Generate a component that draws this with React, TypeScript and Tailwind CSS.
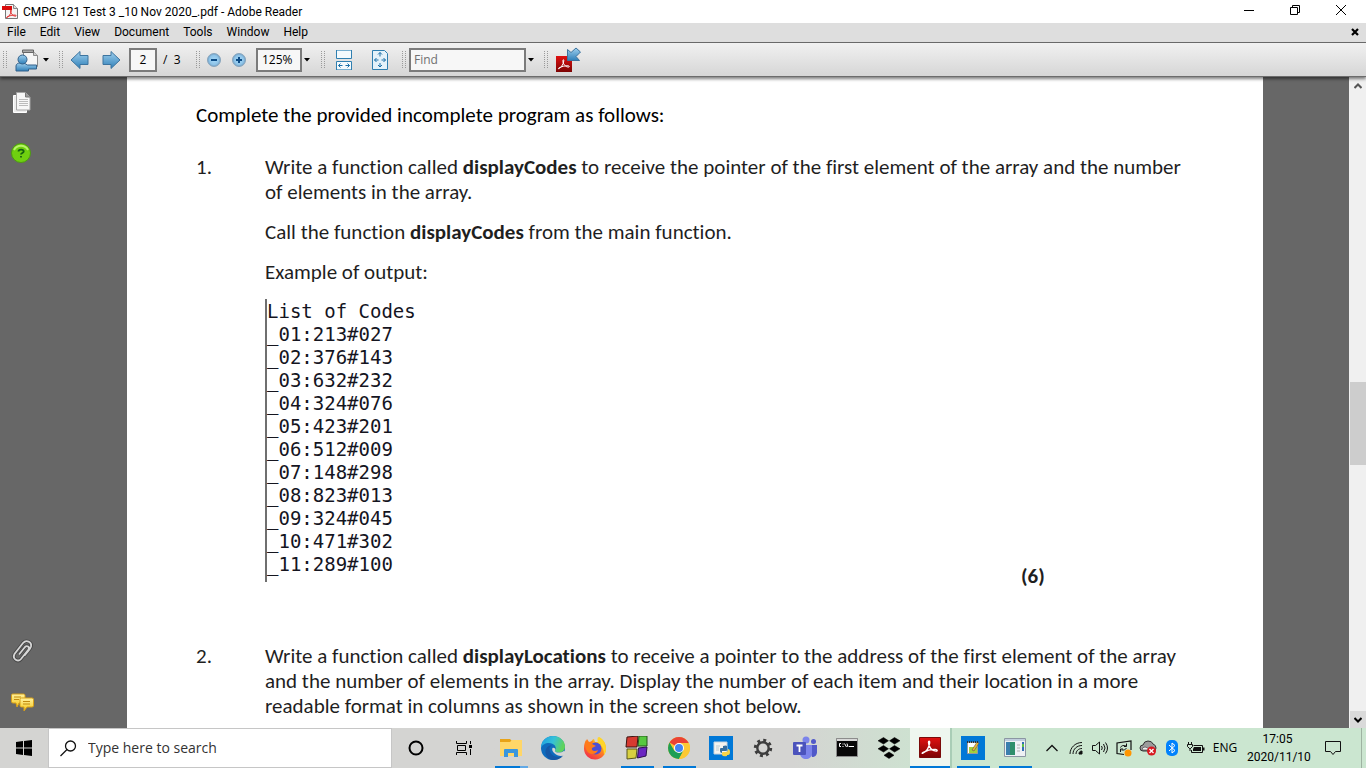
import React from "react";

const codes = [
  "01:213#027",
  "02:376#143",
  "03:632#232",
  "04:324#076",
  "05:423#201",
  "06:512#009",
  "07:148#298",
  "08:823#013",
  "09:324#045",
  "10:471#302",
  "11:289#100",
];

const menus = ["File", "Edit", "View", "Document", "Tools", "Window", "Help"];

function PdfMark({ stroke }: { stroke: string }) {
  return (
    <path
      d="M3 13.2c2.4-1 4.600-3.600 5.300-7.800.2-1.500-.9-1.800-.9-.2 0 3.400 2.600 6.300 5.600 6.400 1.200 0 1.100-1.200-.3-1.300-3.300-.3-6.600.8-9.200 2.200-.8.500-1 .9-.5.700z"
      fill="none"
      stroke={stroke}
      strokeWidth="1"
    />
  );
}

function Grip() {
  return (
    <svg width="4" height="18" viewBox="0 0 4 18" className="shrink-0" aria-hidden="true">
      <path d="M.5 0v18M3.500 0v18" stroke="#9a9a9a" strokeDasharray="1 1" />
    </svg>
  );
}

function Caret() {
  return (
    <svg width="6" height="4" viewBox="0 0 6 4" aria-hidden="true">
      <path d="M0 0h6L3 3.500z" fill="#000" />
    </svg>
  );
}

function TitleBar() {
  return (
    <header className="flex h-[23px] shrink-0 items-center bg-white pl-[2px]">
      <svg width="17" height="17" viewBox="0 0 17 17" aria-hidden="true">
        <path d="M3.500 1.500h8l4 4v10h-12z" fill="#f4f4f4" stroke="#777" />
        <path d="M11.500 1.500v4h4" fill="#ddd" stroke="#888" />
        <rect x="0" y="3" width="10" height="4" fill="#d90b0b" />
        <g transform="translate(2 3) scale(.88)"><PdfMark stroke="#e02020" /></g>
      </svg>
      <h1 className="ml-1 font-['Roboto',sans-serif] text-xs whitespace-nowrap">CMPG 121 Test 3 _10 Nov 2020_.pdf - Adobe Reader</h1>
      <div className="mr-[2px] ml-auto flex h-full items-center pb-[3px]">
        <button aria-label="Minimize" className="flex h-full w-[46px] items-center justify-center">
          <svg width="10" height="10" viewBox="0 0 10 10"><path d="M0 5.500h10" stroke="#000" /></svg>
        </button>
        <button aria-label="Restore" className="flex h-full w-[46px] items-center justify-center">
          <svg width="10" height="10" viewBox="0 0 10 10">
            <path d="M.5 2.500h7v7h-7zM2.500 2.500v-2h7v7h-2" fill="none" stroke="#000" />
          </svg>
        </button>
        <button aria-label="Close" className="flex h-full w-[46px] items-center justify-center">
          <svg width="10" height="10" viewBox="0 0 10 10"><path d="M0 0l10 10M10 0L0 10" stroke="#000" /></svg>
        </button>
      </div>
    </header>
  );
}

function MenuBar() {
  return (
    <nav className="flex h-5 shrink-0 items-center gap-[14px] border-b border-[#6c6c6c] bg-[#dedede] pb-[2px] pl-[7px] font-['Roboto',sans-serif]">
      {menus.map((m) => (
        <button key={m} className="text-xs">{m}</button>
      ))}
      <button aria-label="Close document" className="mr-[7px] ml-auto">
        <svg width="8" height="8" viewBox="0 0 8 8"><path d="M1 1l6 6M7 1L1 7" stroke="#000" strokeWidth="2.200" /></svg>
      </button>
    </nav>
  );
}

function Gradients() {
  return (
    <svg width="0" height="0" className="absolute" aria-hidden="true">
      <defs>
        <linearGradient id="blue" x1="0" y1="0" x2="0" y2="1">
          <stop offset="0" stopColor="#9fd0ee" />
          <stop offset="1" stopColor="#2f7fb8" />
        </linearGradient>
        <radialGradient id="knob">
          <stop offset="0" stopColor="#a5d8f8" />
          <stop offset=".7" stopColor="#8fc4e8" />
          <stop offset="1" stopColor="#6d9fc6" />
        </radialGradient>
        <linearGradient id="red" x1="0" y1="0" x2="0" y2="1">
          <stop offset="0" stopColor="#e01010" />
          <stop offset="1" stopColor="#7c0404" />
        </linearGradient>
        <linearGradient id="yellow" x1="0" y1="0" x2="0" y2="1">
          <stop offset="0" stopColor="#fff2a0" />
          <stop offset="1" stopColor="#f5c516" />
        </linearGradient>
        <linearGradient id="edge" x1="0" y1="0" x2="1" y2=".3">
          <stop offset="0" stopColor="#1b9de2" />
          <stop offset=".55" stopColor="#35c1d8" />
          <stop offset="1" stopColor="#5fd35c" />
        </linearGradient>
        <linearGradient id="fox" x1=".8" y1="0" x2=".2" y2="1">
          <stop offset="0" stopColor="#ffe226" />
          <stop offset=".45" stopColor="#ff8a1e" />
          <stop offset="1" stopColor="#f0264f" />
        </linearGradient>
      </defs>
    </svg>
  );
}

function ZoomKnob({ plus }: { plus?: boolean }) {
  return (
    <svg width="16" height="16" viewBox="0 0 16 16">
      <circle cx="8" cy="8" r="6.500" fill="url(#knob)" stroke="#8aa6bd" />
      <path d={plus ? "M5 8h6M8 5v6" : "M5 8h6"} stroke="#0d4c86" strokeWidth="2" />
    </svg>
  );
}

function ToolBar() {
  const field = "h-6 border-2 border-[#7b7b7b] bg-[#f7f7f7] text-xs outline-none";
  return (
    <div className="z-10 flex h-[34px] shrink-0 items-center border-b border-[#6c6c6c] bg-linear-to-b from-[#f1f1f1] to-[#d6d6d6] pl-[3px] shadow-[0_2px_3px_rgba(0,0,0,0.5)]">
      <Grip />
      <button aria-label="Collaborate" className="ml-2 flex items-center gap-1">
        <svg width="24" height="24" viewBox="0 0 24 24">
          <path d="M8.500 3.500h10l4 4v11h-14z" fill="#f6f6f6" stroke="#8b8b8b" />
          <path d="M18.500 3.500v4h4" fill="#ccc" stroke="#8b8b8b" />
          <path d="M7.500 4.500v-2.500h11v2.500z" fill="#aaa" stroke="#666" />
          <path d="M1 23v-5c0-2 2-3 4-3h4l3.500 2h9v4h-8V23z" fill="url(#blue)" stroke="#33618a" />
          <circle cx="7.500" cy="11.500" r="4.500" fill="url(#blue)" stroke="#33618a" />
        </svg>
        <Caret />
      </button>
      <div className="ml-[10px]"><Grip /></div>
      <button aria-label="Previous page" className="ml-[7px]">
        <svg width="20" height="20" viewBox="0 0 20 20">
          <path d="M1 10l9-8.500v4h8v9h-8v4z" fill="url(#blue)" stroke="#3d749f" />
        </svg>
      </button>
      <button aria-label="Next page" className="ml-[11px]">
        <svg width="20" height="20" viewBox="0 0 20 20">
          <path d="M19 10l-9-8.500v4H2v9h8v4z" fill="url(#blue)" stroke="#3d749f" />
        </svg>
      </button>
      <input aria-label="Page number" defaultValue="2" className={`${field} ml-2 w-7 text-center`} />
      <span className="ml-[6px] w-[33px] text-xs">/&nbsp; 3</span>
      <Grip />
      <button aria-label="Zoom out" className="ml-[6px]"><ZoomKnob /></button>
      <button aria-label="Zoom in" className="ml-[9px]"><ZoomKnob plus /></button>
      <input aria-label="Zoom level" defaultValue="125%" className={`${field} ml-[9px] w-[46px] pl-1`} />
      <button aria-label="Zoom presets" className="ml-[2px]"><Caret /></button>
      <div className="ml-[11px]"><Grip /></div>
      <button aria-label="Fit width" className="ml-[11px]">
        <svg width="16" height="20" viewBox="0 0 16 20">
          <path d="M.5 0v8.500h15V0M.5 20v-8.500h15V20" fill="#f4fafd" stroke="#2f7fb0" />
          <path d="M1 19.500h14M1 .5h14" stroke="#79afd0" />
          <path d="M2.500 15.500h4M9.500 15.500h4M4.500 13.500l-2 2 2 2M11.500 13.500l2 2-2 2" fill="none" stroke="#1a6fa8" />
        </svg>
      </button>
      <button aria-label="Fit page" className="ml-5">
        <svg width="16" height="20" viewBox="0 0 16 20">
          <path d="M.5.5h12l3 3v16H.5z" fill="#e4f2fa" stroke="#2f7fb0" />
          <path d="M8 2.500v4M8 13v4M2.500 10h4M9.500 10h4M6 4.500l2-2 2 2M6 15l2 2 2-2M4.500 8l-2 2 2 2M11.500 8l2 2-2 2" fill="none" stroke="#1a6fa8" />
        </svg>
      </button>
      <div className="ml-[14px]"><Grip /></div>
      <input aria-label="Find" placeholder="Find" className={`${field} ml-[3px] w-[117px] pl-[3px] placeholder:text-[#707070]`} />
      <button aria-label="Find options" className="ml-[2px]"><Caret /></button>
      <div className="ml-[10px]"><Grip /></div>
      <button aria-label="Open in Acrobat" className="ml-[6px]">
        <svg width="28" height="26" viewBox="0 0 28 26">
          <rect x="2" y="9" width="16" height="16" fill="url(#red)" />
          <g transform="translate(1.500 8.500)"><PdfMark stroke="#fff" /></g>
          <path d="M13.500 2.500l3.500 3 5-4.500 4.500 4-4.500 4.500 3.500 4h-12z" fill="url(#blue)" stroke="#3d749f" />
        </svg>
      </button>
    </div>
  );
}

function SideRail() {
  return (
    <aside className="flex w-[127px] shrink-0 flex-col items-start bg-[#676767] pt-[14px] pb-[15px] pl-[11px]">
      <button aria-label="Pages">
        <svg width="22" height="24" viewBox="0 0 22 24">
          <path d="M2.500 4.500h13v17h-13z" fill="#eee" stroke="#fff" />
          <path d="M5.500 1.500h9l4.500 4.500v13H5.500z" fill="#f7f7f7" stroke="#a5a5a5" />
          <path d="M14.500 1.500V6H19" fill="#999" stroke="#777" />
          <path d="M8 8.500h9M8 10.500h9M8 12.500h9M8 14.500h9" stroke="#bbb" />
        </svg>
      </button>
      <button aria-label="How to" className="mt-[27px]">
        <svg width="22" height="22" viewBox="0 0 22 22">
          <circle cx="10" cy="11" r="9.500" fill="#6fd010" stroke="#4d9d10" />
          <path d="M3 8a8 8 0 0 1 14 0" fill="none" stroke="#b8f26a" strokeWidth="2" />
          <path d="M7.500 9.500c0-2.500 5.200-2.500 5.200 0 0 1.500-2.700 1.500-2.700 3M10 14v1.500" fill="none" stroke="#14620f" strokeWidth="1.800" />
        </svg>
      </button>
      <button aria-label="Attachments" className="mt-auto">
        <svg width="24" height="26" viewBox="0 0 24 26" fill="none">
          <path d="M8 15.500l6-7.500c2-2 5 0 3.500 2.500L10 20c-3 3.500-9 0-6.500-5L12 4c3-3.500 9-1.500 8 3.500-.5 2-2 3.500-4 6l-2.500 3" stroke="#444" strokeWidth="3.500" />
          <path d="M8 15.500l6-7.500c2-2 5 0 3.500 2.500L10 20c-3 3.500-9 0-6.500-5L12 4c3-3.500 9-1.500 8 3.500-.5 2-2 3.500-4 6l-2.500 3" stroke="#d6d6d6" strokeWidth="1.800" />
        </svg>
      </button>
      <button aria-label="Comments" className="mt-7">
        <svg width="24" height="20" viewBox="0 0 24 20">
          <path d="M1.500 1h11q1.500 0 1.500 1.500v6q0 1.500-1.500 1.500H8l-2 4-1-4H2Q.5 10 .5 8.500v-6Q.5 1 1.500 1z" fill="url(#yellow)" stroke="#d8a018" />
          <path d="M3 4h7M3 6.500h5" stroke="#c08a10" />
          <path d="M10.500 5h10.500q1.500 0 1.500 1.500v6q0 1.500-1.500 1.500h-5l-3 4v-4h-2.500Q9 14 9 12.500v-6Q9 5 10.500 5z" fill="url(#yellow)" stroke="#d8a018" />
          <path d="M12 8.500h7M12 11h7" stroke="#c08a10" />
        </svg>
      </button>
    </aside>
  );
}

function DocumentPage() {
  return (
    <main className="min-w-0 flex-1 overflow-hidden bg-white pt-[26px] pl-[69px] font-['Carlito','Lato',sans-serif] text-[21px] leading-[25px] whitespace-nowrap text-[#1f1f1f] [font-variant-ligatures:none]">
      <p className="text-black">Complete the provided incomplete program as follows:</p>
      <section className="mt-[27px] grid grid-cols-[69px_1fr]">
        <span>1.</span>
        <div>
          <p>
            Write a function called <b>displayCodes</b> to receive the pointer of the first element of the array and the number
            <br />
            of elements in the array.
          </p>
          <p className="mt-[15px]">
            Call the function <b>displayCodes</b> from the main function.
          </p>
          <p className="mt-[15px]">Example of output:</p>
          <div className="mt-[14px] flex items-end">
            <pre className="h-[283px] w-[756px] border-l-2 border-[#6f6f6f] pt-[1px] font-['DejaVu_Sans_Mono',monospace] text-[19px] leading-[23px] text-[#15151f]">
              {["List of Codes", ...codes.map((c) => "_" + c)].join("\n")}
            </pre>
            <b className="-mb-[7px]">(6)</b>
          </div>
        </div>
      </section>
      <section className="mt-[62px] grid grid-cols-[69px_1fr]">
        <span>2.</span>
        <p>
          Write a function called <b>displayLocations</b> to receive a pointer to the address of the first element of the array
          <br />
          and the number of elements in the array. Display the number of each item and their location in a more
          <br />
          readable format in columns as shown in the screen shot below.
        </p>
      </section>
    </main>
  );
}

function ScrollBar() {
  return (
    <div className="flex w-[17px] shrink-0 flex-col bg-[#f0f0f0] pl-px">
      <button aria-label="Scroll up" className="flex h-[17px] items-center justify-center">
        <svg width="8" height="6" viewBox="0 0 8 6"><path d="M.5 5L4 1.500 7.500 5" fill="none" stroke="#555" strokeWidth="2" /></svg>
      </button>
      <div className="flex-[288]" />
      <div className="flex-[83] bg-[#cdcdcd]" />
      <div className="flex-[246]" />
      <button aria-label="Scroll down" className="flex h-[17px] items-center justify-center bg-[#dadada]">
        <svg width="8" height="6" viewBox="0 0 8 6"><path d="M.5 1L4 4.500 7.500 1" fill="none" stroke="#000" strokeWidth="2" /></svg>
      </button>
    </div>
  );
}

const apps: { name: string; open?: boolean; active?: boolean; stacked?: boolean; art: React.ReactNode }[] = [
  {
    name: "File Explorer",
    open: true,
    stacked: true,
    art: (
      <>
        <path d="M1 3h10l2 2h10v14H1z" fill="#e8a317" />
        <path d="M1 6h10l2-2h10v16H1z" fill="#ffd667" />
        <path d="M5 21v-7q0-1 1-1h12q1 0 1 1v7h-4v-4H9v4z" fill="#3a96dd" />
      </>
    ),
  },
  {
    name: "Edge",
    art: (
      <>
        <circle cx="12" cy="12" r="12" fill="#0f6cbd" />
        <path d="M0 12C0 5 5 0 12 0s12 5 12 10.500c0 4-3 6-6.500 6-3 0-4-1.500-3.200-2.600C16 11 13 7 8 7 4 7 1 9 0 12z" fill="url(#edge)" />
        <path d="M8.500 12.500c0 5 4.500 8.500 9 8.500 2 0 4-.8 5-2C20 23 16 24 12 24 7 24 4 19 4.500 15 5 11 8 9 11 9.500c-1.500.5-2.500 1.500-2.500 3z" fill="#1558a6" />
        <path d="M14.300 13.900c-.8 1.100.2 2.600 3.200 2.600 2 0 4-.5 5.200-1.600l2.300 1.100-1.500 3c-3 1.500-6.500 1-8.500-.5C12 17 10.500 14 11.500 12c1.500-.5 3 .5 2.800 1.900z" fill="#d5d6d4" />
      </>
    ),
  },
  {
    name: "Firefox",
    art: (
      <>
        <path d="M1 12c0-4 1-6 2-8l2 3 3-1c1-2 2-3 3-3l1 3 4 0V1c4 2 7 6 7 11a11 11 0 0 1-22 1z" fill="url(#fox)" />
        <path d="M15 1c4 2 8 6 8 12 0 2-.5 4-2 6 0-6-2-9-5-11-1.500-2-2-4-1-7z" fill="#ffd52b" />
        <circle cx="12.500" cy="12.500" r="6" fill="#4b4fd6" />
        <path d="M2 7l2-4 2 3 4-1-1 3 4 2-4 2c-1 3 3 4 6 2-1 4-6 5-9 3-3-2-4-6-4-10z" fill="#ff7a1a" />
      </>
    ),
  },
  {
    name: "Code::Blocks",
    open: true,
    art: (
      <>
        <path d="M2 1l11-1-1 11H1z" fill="#d63a30" stroke="#3a1512" />
        <path d="M14 0h8v10h-9z" fill="#57c840" stroke="#24551b" />
        <path d="M2 13h10l-1 9-9 1z" fill="#d8d040" stroke="#59561c" />
        <path d="M13.500 12l8.500-1-1 9-8.500 2z" fill="#6a25c2" stroke="#2a104d" />
      </>
    ),
  },
  {
    name: "Chrome",
    open: true,
    art: (
      <>
        <circle cx="12" cy="12" r="11" fill="#fcc934" />
        <path d="M12 12L2.500 6.500a11 11 0 0 1 19 0V7H12z" fill="#ea4335" />
        <path d="M2.500 6.500A11 11 0 0 0 12 23l4.500-8.500L12 12 7.500 15z" fill="#1e9e56" />
        <path d="M12 7h9.800A11 11 0 0 1 12 23l4.500-8.500z" fill="#fcc934" />
        <circle cx="12" cy="12" r="5" fill="#fff" />
        <circle cx="12" cy="12" r="4" fill="#4285f4" />
      </>
    ),
  },
  {
    name: "Python IDLE",
    art: (
      <>
        <path d="M0 0h24v24H0z" fill="#0078d7" />
        <path d="M5 6h13v12H5z" fill="#f4f4ef" stroke="#c5d3dd" />
        <path d="M7 10h4M7 12h3M7 14h3" stroke="#bccad2" />
        <path d="M11 15v-2q0-1 1-1h2v-2q3-1 4 0v4q0 1-1 1h-4v2q-2 0-2-2z" fill="#356f9f" />
        <path d="M13 19v-2q0-1 1-1h3q2 0 2-3 2 0 2 3t-2 3h-1v1q-4 1-5-1z" fill="#f7d448" />
      </>
    ),
  },
  {
    name: "Settings",
    art: (
      <>
        <circle cx="12" cy="12" r="7.700" fill="none" stroke="#3d3d3d" strokeWidth="3" strokeDasharray="2.900 3.148" />
        <circle cx="12" cy="12" r="5.700" fill="none" stroke="#3d3d3d" strokeWidth="2.400" />
      </>
    ),
  },
  {
    name: "Teams",
    art: (
      <>
        <circle cx="20.500" cy="5.500" r="2.500" fill="#5059c9" />
        <circle cx="13" cy="4" r="3.500" fill="#7b83eb" />
        <path d="M15 9h9v7c0 3-2 5-5 5z" fill="#5059c9" />
        <path d="M7 9h12v8c0 4-3 6-6 6s-6-2-6-6z" fill="#7b83eb" />
        <rect x="0" y="6" width="13" height="13" rx="1" fill="#4b53bc" />
        <path d="M3.500 9.500h6M6.500 9.500V16" stroke="#fff" strokeWidth="1.800" />
      </>
    ),
  },
  {
    name: "Command Prompt",
    art: (
      <>
        <path d="M1.500 2.500h21v18h-21z" fill="#080808" stroke="#8c8c8c" />
        <path d="M2 3h20v2H2z" fill="#d8d8d8" />
        <path d="M6 7.500H4.500v3H6M8 7.500v1M8 10v1M9.500 7.500l2 3.500M12 7.500l1 3.500M14 10.500h5" stroke="#fff" fill="none" />
      </>
    ),
  },
  {
    name: "Dropbox",
    art: (
      <path
        d="M6.500 1.500l5 3.300-5 3.300-5.500-3.300zM17.500 1.500l5.500 3.300-5.500 3.300-5-3.300zM6.500 9.500l5 3.300-5 3.300L1 12.800zM17.500 9.500l5.500 3.300-5.500 3.300-5-3.300zM12 16l5 3.300-5 3.200-5-3.200z"
        fill="#000"
        stroke="#000"
        strokeWidth=".5"
      />
    ),
  },
  {
    name: "Adobe Reader",
    active: true,
    stacked: true,
    art: (
      <>
        <path d="M1.500 1.500h21v20h-21z" fill="url(#red)" stroke="#7a0a0a" />
        <g transform="translate(.5 -.5) scale(1.350)"><PdfMark stroke="#fff" /></g>
      </>
    ),
  },
  {
    name: "Notepad++",
    open: true,
    art: (
      <>
        <path d="M0 0h24v24H0z" fill="#0078d7" />
        <path d="M6.500 6.500h10v11h-10z" fill="#fff" stroke="#999" />
        <path d="M8 11h8v6H8z" fill="#a4cf3c" />
        <path d="M11 14l5-8 2 1-5 8z" fill="#f0b72e" stroke="#555" strokeWidth=".6" />
        <path d="M6 6h11" stroke="#333" strokeDasharray="1 1" strokeWidth="2" />
      </>
    ),
  },
  {
    name: "Output",
    open: true,
    art: (
      <>
        <path d="M1.500 2.500h21v18h-21z" fill="#eef1f4" stroke="#8b96a3" />
        <path d="M2 3h20v2H2z" fill="#c0cedd" />
        <path d="M3 6h9v13H3z" fill="#2f8f6b" />
        <path d="M3 6h4v13H3z" fill="#3b7fae" />
        <path d="M14 9h3M14 12h3M14 15h3" stroke="#b0b0b0" />
        <path d="M20 6v9" stroke="#2f6fb5" strokeWidth="2" />
        <path d="M20 8v3" stroke="#5bc04c" strokeWidth="2" />
      </>
    ),
  },
];

function Tray() {
  const cell = "flex w-6 items-center justify-center";
  return (
    <div className="ml-auto flex h-full items-center text-xs">
      <button aria-label="Show hidden icons" className={cell}>
        <svg width="12" height="8" viewBox="0 0 12 8"><path d="M.5 7L6 1.500 11.500 7" fill="none" stroke="#111" strokeWidth="1.300" /></svg>
      </button>
      <button aria-label="Wi-Fi" className={cell}>
        <svg width="14" height="14" viewBox="0 0 14 14" fill="none" stroke="#111">
          <path d="M1 13C1 7 6 1.500 13 1.500M4 13c0-5 4-8.500 9-8.500M7 13c0-3 2.500-5.500 6-5.500" />
          <path d="M10 13c0-2 1-3 3-3v3z" fill="#111" />
        </svg>
      </button>
      <button aria-label="Volume" className={cell}>
        <svg width="18" height="14" viewBox="0 0 18 14" fill="none" stroke="#111">
          <path d="M1.500 4.500h3l4-3.500v12l-4-3.500h-3zM10.500 5q1.500 2 0 4M12.500 3q3 4 0 8M14.500 1.500q4 5.500 0 11" />
        </svg>
      </button>
      <button aria-label="Updates" className={cell}>
        <svg width="18" height="18" viewBox="0 0 18 18" fill="none" stroke="#111">
          <path d="M9 15.500l-7-1V4l14-2v9" strokeWidth="1.200" />
          <path d="M5.500 8.500Q7 5.500 11 7M11.500 4.500V7.500H9M11.500 9Q10 12 6.500 11M5.500 13v-3H8" />
          <circle cx="13" cy="14" r="3.500" fill="#ff9500" stroke="none" />
        </svg>
      </button>
      <button aria-label="OneDrive" className={cell}>
        <svg width="18" height="16" viewBox="0 0 18 16">
          <path d="M4 11q-3 0-3-3t3-3q1-4 5-4t5 3q3 1 3 4t-3 3z" fill="#9c9c9c" stroke="#333" />
          <path d="M3 10q0-3 3-3t4 3z" fill="#eee" stroke="#333" strokeWidth=".6" />
          <circle cx="12.500" cy="11" r="4.500" fill="#d71920" />
          <path d="M10.500 9l4 4M14.500 9l-4 4" stroke="#fff" strokeWidth="1.300" />
        </svg>
      </button>
      <button aria-label="Bluetooth" className={cell}>
        <svg width="12" height="16" viewBox="0 0 12 16">
          <rect width="12" height="16" rx="5" fill="#0082fc" />
          <path d="M3 5l6 5.500L6 13V3l3 2.500L3 11" fill="none" stroke="#fff" />
        </svg>
      </button>
      <button aria-label="Battery" className={cell}>
        <svg width="18" height="14" viewBox="0 0 18 14" fill="none" stroke="#111">
          <path d="M4.500 9v2.500h11v-7h-9" />
          <path d="M7 6h7v4H6V8z" fill="#111" stroke="none" />
          <path d="M16.500 6.500v3" strokeWidth="2" />
          <path d="M1.500 1v2M4.500 1v2M.5 3.500h5v2L3.500 7.500h-1L.5 5.500zM3 7v3" />
        </svg>
      </button>
      <button aria-label="Input language" className="ml-[3px] w-7">ENG</button>
      <button aria-label="Clock" className="ml-2 w-[61px] text-center font-['Roboto',sans-serif] leading-[18px] whitespace-nowrap">
        17:05
        <br />
        2020/11/10
      </button>
      <button aria-label="Notifications" className="ml-[17px]">
        <svg width="16" height="16" viewBox="0 0 16 16"><path d="M.5 1.500h15v10h-5L8 14.500l-2.500-3h-5z" fill="none" stroke="#111" /></svg>
      </button>
      <button aria-label="Show desktop" className="ml-5 h-full w-[5px] border-l border-[#9eb3a2]" />
    </div>
  );
}

function TaskBar() {
  return (
    <footer className="flex h-10 shrink-0 items-center bg-linear-to-r from-[#d4d4d2] from-58% to-[#cbe6d0] to-70% text-black">
      <button aria-label="Start" className="flex h-full w-12 items-center justify-center">
        <svg width="16" height="16" viewBox="0 0 16 16">
          <path d="M0 2l7-1v6.500H0zM8 1l8-1v7.500H8zM0 8.500h7V15l-7-1zM8 8.500h8V16l-8-1z" fill="#000" />
        </svg>
      </button>
      <label className="flex h-10 w-[344px] items-center border border-[#c6c6c6] bg-white pl-[11px]">
        <svg width="17" height="17" viewBox="0 0 17 17" fill="none" stroke="#111" strokeWidth="1.300">
          <circle cx="10.500" cy="6" r="5" />
          <path d="M7 9.500L.5 16" />
        </svg>
        <input aria-label="Type here to search" placeholder="Type here to search" className="ml-[11px] w-60 bg-transparent text-sm outline-none placeholder:text-[#333]" />
      </label>
      <button aria-label="Cortana" className="flex h-full w-12 items-center justify-center">
        <svg width="16" height="16" viewBox="0 0 16 16"><circle cx="8" cy="8" r="6.500" fill="none" stroke="#000" strokeWidth="2" /></svg>
      </button>
      <button aria-label="Task view" className="flex h-full w-12 items-center justify-center">
        <svg width="16" height="16" viewBox="0 0 16 16" fill="none" stroke="#000">
          <path d="M.5 1v2.500h10V1M.5 15v-2.500h10V15M1.500 5.500h8v5h-8zM14.500 1v3M14.500 9v6" />
          <path d="M13 5h3v3h-3z" fill="#000" stroke="none" />
        </svg>
      </button>
      <div className="ml-[2px] flex h-full">
        {apps.map((a) => (
          <button
            key={a.name}
            aria-label={a.name}
            className={
              "flex h-full w-[42px] flex-col items-center pt-2 " +
              (a.active ? "border-r-2 border-[#a9cdb6] bg-[#eef6ef]" : "")
            }
          >
            <svg width="24" height="24" viewBox="0 0 24 24" aria-hidden="true">{a.art}</svg>
            {(a.open || a.active) && (
              <span className={"mt-auto flex h-[2px] justify-end bg-[#0078d7] " + (a.active ? "w-full" : "w-[33px]")}>
                {a.stacked && !a.active && <span className="h-full w-2 bg-[#62a9e6]" />}
              </span>
            )}
          </button>
        ))}
      </div>
      <Tray />
    </footer>
  );
}

export default function App() {
  return (
    <div className="flex h-screen flex-col overflow-hidden font-['Open_Sans',sans-serif] text-black">
      <Gradients />
      <TitleBar />
      <MenuBar />
      <ToolBar />
      <div className="flex min-h-0 flex-1">
        <SideRail />
        <DocumentPage />
        <div className="w-[86px] shrink-0 bg-[#676767]" />
        <ScrollBar />
      </div>
      <TaskBar />
    </div>
  );
}
